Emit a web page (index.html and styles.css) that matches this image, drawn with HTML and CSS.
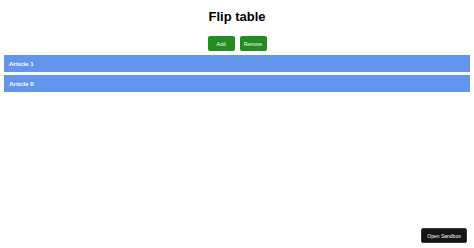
FILE: index.html
```html
<!DOCTYPE html>
<html lang="en">
<head>
<meta charset="utf-8">
<title>Flip table</title>
<link rel="stylesheet" href="styles.css">
</head>
<body>
<div class="page">
  <h1 class="title">Flip table</h1>
  <div class="actions">
    <button class="btn">Add</button>
    <button class="btn">Remove</button>
  </div>
  <ul class="list">
    <li class="item">Article 1</li>
    <li class="item">Article 0</li>
  </ul>
</div>
<a class="sandbox">Open Sandbox</a>
</body>
</html>
```
FILE: styles.css
```css
html, body {
  margin: 0;
  padding: 0;
  background: #ffffff;
  font-family: "Liberation Sans", Arial, sans-serif;
}
.page {
  padding: 0 4px;
}
.title {
  margin: 9px 0 12px;
  font-size: 13px;
  line-height: 15px;
  font-weight: bold;
  text-align: center;
  color: #000;
}
.actions {
  display: flex;
  justify-content: center;
  gap: 5px;
  margin-bottom: 4px;
}
.btn {
  width: 27px;
  height: 15px;
  padding: 0;
  border: none;
  border-radius: 2px;
  background: #228b22;
  color: #fff;
  font-family: "Liberation Sans", Arial, sans-serif;
  font-size: 5px;
}
.list {
  list-style: none;
  margin: 0;
  padding: 0;
  display: flex;
  flex-direction: column;
  gap: 3px;
}
.item {
  height: 17px;
  display: flex;
  align-items: center;
  padding: 0 5px;
  background: #6495ed;
  color: #fff;
  font-size: 6.25px;
  font-weight: bold;
}
.sandbox {
  position: fixed;
  right: 7px;
  bottom: 5px;
  width: 46px;
  height: 15px;
  box-sizing: border-box;
  display: flex;
  align-items: center;
  justify-content: center;
  background: #151515;
  border: 1px solid #3a3a3a;
  border-radius: 2px;
  color: #fff;
  font-size: 5px;
}
```
